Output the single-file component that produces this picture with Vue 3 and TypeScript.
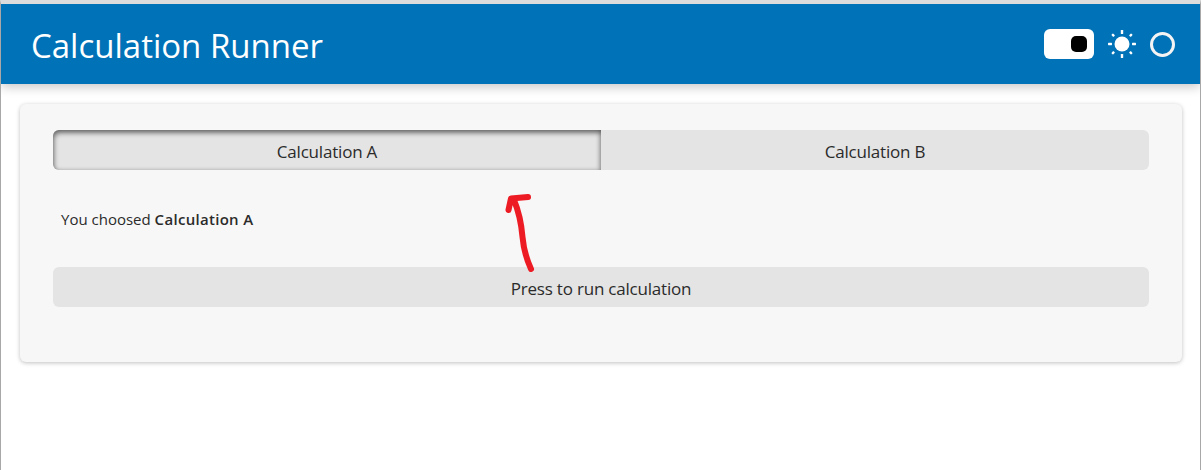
<script setup lang="ts">
import { ref } from 'vue'

const tabs = ['Calculation A', 'Calculation B']
const active = ref(0)
const rays = [0, 45, 90, 135, 180, 225, 270, 315]
</script>

<template>
  <div class="frame">
    <header class="bar">
      <h1 class="title">Calculation Runner</h1>
      <div class="tools">
        <span class="toggle"><span class="knob"></span></span>
        <svg class="sun" width="30" height="30" viewBox="0 0 30 30">
          <circle cx="15" cy="15" r="7.5" fill="#fff" />
          <rect
            v-for="r in rays"
            :key="r"
            x="13.8"
            y="1"
            width="2.4"
            :height="r % 90 === 0 ? 4 : 3"
            rx="0.6"
            fill="#fff"
            :transform="`rotate(${r} 15 15)`"
          />
        </svg>
        <span class="ring"></span>
      </div>
    </header>
    <main class="page">
      <section class="card">
        <div class="tabs">
          <button
            v-for="(t, i) in tabs"
            :key="t"
            class="tab"
            :class="{ on: active === i }"
            @click="active = i"
          >{{ t }}</button>
        </div>
        <p class="msg">You choosed <strong>{{ tabs[active] }}</strong></p>
        <button class="run">Press to run calculation</button>
        <svg class="arrow" width="40" height="90" viewBox="0 0 40 90">
          <path
            d="M34 79 C29 68 26.5 58 25.5 47 C24.5 35 22 22 17 10 M31 7 L14 8.5 L11.5 20"
            fill="none"
            stroke="#ed1c24"
            stroke-width="6"
            stroke-linecap="round"
            stroke-linejoin="round"
          />
        </svg>
      </section>
    </main>
  </div>
</template>

<style>
html,
body {
  margin: 0;
  background: #fff;
}
</style>

<style scoped>
.frame {
  box-sizing: border-box;
  height: 470px;
  overflow: hidden;
  background: #fff;
  border-top: 4px solid #dcdcdc;
  border-left: 1px solid #a8a8a8;
  border-right: 1px solid #a8a8a8;
  font-family: "Open Sans", "Noto Sans", sans-serif;
  color: #2b2b2b;
}
.bar {
  height: 80px;
  box-sizing: border-box;
  padding: 0 25px 0 30px;
  background: #0072b7;
  display: flex;
  align-items: center;
  justify-content: space-between;
  box-shadow: 0 3px 10px rgba(0, 0, 0, 0.22);
}
.title {
  margin: 0;
  padding-top: 3px;
  font-size: 33px;
  font-weight: 400;
  color: #fff;
}
.tools {
  display: flex;
  align-items: center;
}
.toggle {
  width: 50px;
  height: 30px;
  border-radius: 6px;
  background: #fff;
  display: flex;
  align-items: center;
  justify-content: flex-end;
  padding-right: 7px;
  box-sizing: border-box;
}
.knob {
  width: 16px;
  height: 16px;
  border-radius: 5px;
  background: #000;
}
.sun {
  margin-left: 13px;
}
.ring {
  box-sizing: border-box;
  width: 25px;
  height: 25px;
  margin-left: 13px;
  border: 3px solid #f4f4f4;
  border-radius: 50%;
}
.page {
  padding: 20px 18px 0 19px;
}
.card {
  position: relative;
  box-sizing: border-box;
  height: 258px;
  padding: 26px 33px 0;
  background: #f7f7f7;
  border-radius: 6px;
  box-shadow: 0 1px 4px rgba(0, 0, 0, 0.25);
}
.tabs {
  display: flex;
}
.tab,
.run {
  height: 40px;
  border: 0;
  padding: 3px 0 0;
  background: #e4e4e4;
  font-family: inherit;
  font-size: 17px;
  letter-spacing: -0.2px;
  color: #2b2b2b;
}
.tab {
  flex: 1;
}
.tab:first-child {
  border-radius: 6px 0 0 6px;
}
.tab:last-child {
  border-radius: 0 6px 6px 0;
}
.tab.on {
  box-shadow: inset 1px 3px 5px rgba(0, 0, 0, 0.5), inset -2px 0 4px rgba(0, 0, 0, 0.2);
}
.msg {
  margin: 40px 0 0 8px;
  height: 18px;
  line-height: 18px;
  font-size: 15px;
}
.msg strong {
  font-weight: 600;
  letter-spacing: 0.3px;
}
.run {
  display: block;
  width: 100%;
  margin-top: 39px;
  border-radius: 6px;
}
.arrow {
  position: absolute;
  left: 477px;
  top: 86px;
}
</style>
